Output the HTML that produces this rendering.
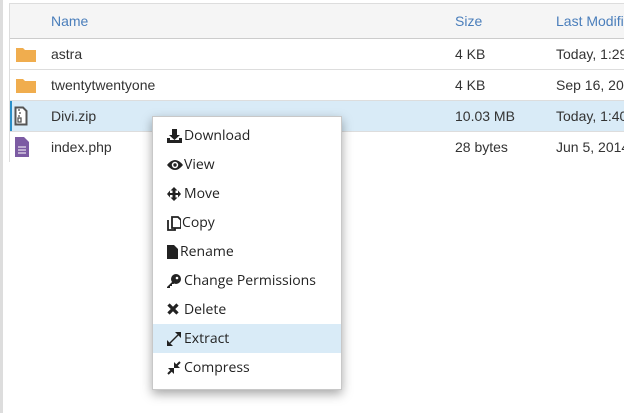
<!DOCTYPE html><html><head><style>
body{margin:0;width:624px;height:413px;background:#fff;position:relative;overflow:hidden;font-family:"Liberation Sans",Arial,sans-serif;font-size:14px;color:#333}
.lb{position:absolute;left:0;top:0;width:3px;height:413px;background:#ddd}
.t{position:absolute;left:9px;top:3px;width:615px;border-top:1px solid #ddd;border-left:1px solid #ddd}
.r{position:relative;height:30px;border-bottom:1px solid #ddd;line-height:30px}
.h{height:34px;line-height:34px;background:#f5f5f5;color:#4a7ebb;border-bottom:1px solid #ccc}
.r span{position:absolute}
.n{left:41px}.s{left:445px}.d{left:546px;white-space:nowrap}
.sel{background:#d9ebf7;box-shadow:inset 2px 0 0 #2a8fc9}
.ic{position:absolute;left:6px;top:7px}
.m{position:absolute;left:152px;top:116px;width:188px;height:272px;background:#fff;border:1px solid #c8c8c8;box-shadow:0 4px 10px rgba(0,0,0,.35);font-family:"Open Sans","DejaVu Sans",sans-serif;font-size:14px;color:#222}
.it{position:absolute;left:0;width:188px;height:29px;line-height:29px}
.it svg{position:absolute;left:14px;top:8px}
.it b{font-weight:normal;position:absolute;left:31px}
.hl{background:#d9ebf7}
</style></head><body>
<div class="lb"></div>
<div class="t">
<div class="r h"><span class="n">Name</span><span class="s">Size</span><span class="d">Last Modified</span></div>
<div class="r"><svg class="ic" width="20" height="16"><path d="M0 2h7l2 2h11v12H0z" fill="#f0ad4e"/></svg><span class="n">astra</span><span class="s">4 KB</span><span class="d">Today, 1:29 PM</span></div>
<div class="r"><svg class="ic" width="20" height="16"><path d="M0 2h7l2 2h11v12H0z" fill="#f0ad4e"/></svg><span class="n">twentytwentyone</span><span class="s">4 KB</span><span class="d">Sep 16, 2021</span></div>
<div class="r sel"><svg class="ic" style="left:4px;top:5px" width="14" height="20"><path d="M1.5 1.5h7.5l3.5 3.5v13.5h-11z" fill="#fff" stroke="#555" stroke-width="2"/><path d="M5 3v2M6 6v2M5 9v2" stroke="#555" stroke-width="1.3"/><rect x="4" y="12" width="3" height="4" fill="none" stroke="#555" stroke-width="1.3"/></svg><span class="n">Divi.zip</span><span class="s">10.03 MB</span><span class="d">Today, 1:40 PM</span></div>
<div class="r" style="border-bottom:none"><svg class="ic" style="left:5px;top:5px" width="14" height="20"><path d="M0 0h9l5 5v15H0z" fill="#7c5ba3"/><path d="M3 10h8M3 13h8M3 16h8" stroke="#fff"/></svg><span class="n">index.php</span><span class="s">28 bytes</span><span class="d">Jun 5, 2014</span></div>
</div>
<div class="m">
<div class="it" style="top:4px"><svg width="15" height="14"><path d="M5 0h5v6h3L7.5 11 2 6h3z M0 9h3v2h9V9h3v5H0z" fill="#222"/></svg><b>Download</b></div>
<div class="it" style="top:33px"><svg width="16" height="14"><path d="M0 7Q8 -3 16 7Q8 17 0 7z" fill="#222"/><circle cx="8" cy="7" r="3.2" fill="#fff"/><circle cx="8" cy="7" r="1.7" fill="#222"/></svg><b>View</b></div>
<div class="it" style="top:62px"><svg width="14" height="14"><path d="M7 0l3.5 3.5H8.5v2.5H11V3.5L14 7l-3 3.5V8H8.5v2.5h2L7 14l-3.5-3.5h2V8H3v2.5L0 7l3-3.5V6h2.5V3.5h-2z" fill="#222"/></svg><b>Move</b></div>
<div class="it" style="top:91px"><svg width="14" height="15"><path d="M1 4v10h7v-2M5 1h6l3 3v8H5z" fill="none" stroke="#222" stroke-width="1.8"/></svg><b style="left:29px">Copy</b></div>
<div class="it" style="top:120px"><svg width="11" height="14"><path d="M0 0h7l4 4v10H0z" fill="#222"/></svg><b style="left:27px">Rename</b></div>
<div class="it" style="top:149px"><svg width="14" height="14"><circle cx="9" cy="5" r="5" fill="#222"/><path d="M6 7L0 13v1h3v-2h2v-2h2z" fill="#222"/><circle cx="10" cy="4" r="1.3" fill="#fff"/></svg><b>Change Permissions</b></div>
<div class="it" style="top:178px"><svg width="12" height="12"><path d="M1.5 1.5l9 9M10.5 1.5l-9 9" stroke="#222" stroke-width="3.2"/></svg><b>Delete</b></div>
<div class="it hl" style="top:207px"><svg width="14" height="14"><path d="M3 11l8-8" stroke="#222" stroke-width="1.4"/><path d="M8 0h6v6zM0 8v6h6z" fill="#222"/></svg><b>Extract</b></div>
<div class="it" style="top:236px"><svg width="14" height="14"><path d="M1 13l5-5M13 1L8 6" stroke="#222" stroke-width="2"/><path d="M7 1v6h6zM1 7h6v6z" fill="#222"/></svg><b>Compress</b></div>
</div>
</body></html>
